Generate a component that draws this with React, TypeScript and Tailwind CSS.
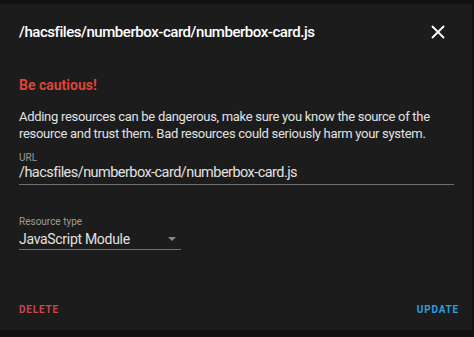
import { X } from "lucide-react"

export default function App() {
  return (
    <div className="h-[337px] w-[474px] overflow-hidden bg-[#111111] font-['Roboto',sans-serif]">
      <div className="mt-[4px] flex h-[326px] w-[472px] flex-col bg-[#1c1c1c] px-[19px] text-[#e1e1e1]">
        <div className="flex items-center justify-between pt-[17px]">
          <h2 className="text-[15px] font-medium leading-[20px] tracking-[-0.45px] text-white">
            /hacsfiles/numberbox-card/numberbox-card.js
          </h2>
          <X className="mr-[4px] h-[22px] w-[22px] text-white" strokeWidth={2} />
        </div>
        <div className="mt-[33px] text-[14px] font-bold leading-[18px] text-[#db4437]">Be cautious!</div>
        <p className="mt-[14px] max-w-[420px] text-[13px] leading-[17px] tracking-[-0.3px] text-[#e1e1e1]">
          Adding resources can be dangerous, make sure you know the source of the resource and trust them. Bad
          resources could seriously harm your system.
        </p>
        <div className="mt-[10px] w-[435px] border-b border-[#6f6f6f]">
          <div className="text-[10px] leading-[12px] text-[#9b9b9b]">URL</div>
          <div className="pb-[2px] text-[14.5px] leading-[18px] tracking-[-0.55px] text-[#e1e1e1]">
            /hacsfiles/numberbox-card/numberbox-card.js
          </div>
        </div>
        <div className="mt-[30px] w-[162px] border-b border-[#6f6f6f]">
          <div className="text-[10px] leading-[14px] text-[#9b9b9b]">Resource type</div>
          <div className="mt-[1px] flex items-center justify-between pb-[1px]">
            <span className="text-[14px] leading-[18px] tracking-[-0.3px] text-[#e1e1e1]">JavaScript Module</span>
            <svg width="8" height="4" viewBox="0 0 10 5" className="mr-[5px]">
              <path d="M0 0 L5 5 L10 0 Z" fill="#8a8a8a" />
            </svg>
          </div>
        </div>
        <div className="-mr-[6px] mt-auto flex items-center justify-between pb-[13px]">
          <button className="text-[10px] font-bold leading-[14px] tracking-[0.8px] text-[#c8474e]">DELETE</button>
          <button className="text-[10px] font-bold leading-[14px] tracking-[0.8px] text-[#2d9fe0]">UPDATE</button>
        </div>
      </div>
    </div>
  )
}
